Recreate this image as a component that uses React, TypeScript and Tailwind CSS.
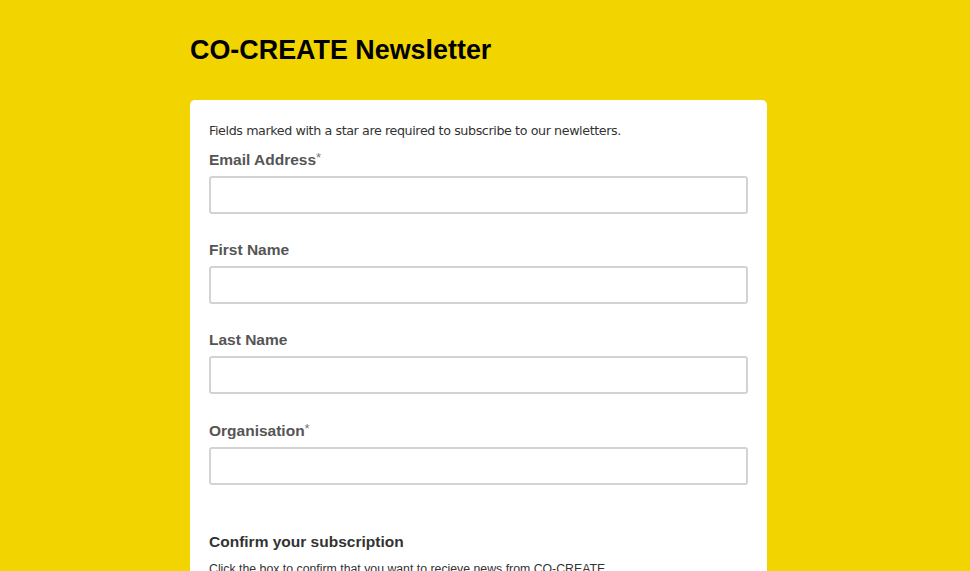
import React from 'react';

const fields = [
  { id: 'email', label: 'Email Address', required: true, gap: 'mt-[8px]' },
  { id: 'first', label: 'First Name', required: false, gap: 'mt-[25px]' },
  { id: 'last', label: 'Last Name', required: false, gap: 'mt-[25px]' },
  { id: 'org', label: 'Organisation', required: true, gap: 'mt-[26px]' },
];

const App: React.FC = () => {
  return (
    <div className="min-h-[571px] bg-[#f2d500] font-['Liberation_Sans',Arial,sans-serif]">
      <div className="ml-[190px] w-[577px] pt-[34px]">
        <h1 className="text-[26.9px] leading-[32px] font-bold text-black">CO-CREATE Newsletter</h1>

        <div className="mt-[34px] bg-white rounded-t-[5px] px-[19px] pt-[20px] pb-[40px]">
          <p className="text-[12.7px] leading-[21px] text-[#333] font-['DejaVu_Sans',sans-serif] tracking-[-0.4px]">
            Fields marked with a star are required to subscribe to our newletters.
          </p>

          {fields.map(f => (
            <div key={f.id} className={f.gap}>
              <label htmlFor={f.id} className="block h-[22px] text-[15.5px] leading-[22px] font-bold text-[#555]">
                {f.label}
                {f.required && <span className="font-normal text-[13px] leading-none align-top relative top-[2px] text-[#777]">*</span>}
              </label>
              <input
                id={f.id}
                type="text"
                className="mt-[5px] block w-full h-[38px] border-2 border-[#d3d3d3] rounded-[3px] bg-white outline-none px-2"
              />
            </div>
          ))}

          <h2 className="mt-[47px] text-[15.5px] leading-[20px] font-bold text-[#333]">Confirm your subscription</h2>
          <p className="mt-[8px] text-[12.3px] leading-[18px] text-[#333]">
            Click the box to confirm that you want to recieve news from CO-CREATE.
          </p>
        </div>
      </div>
    </div>
  );
};

export default App;
